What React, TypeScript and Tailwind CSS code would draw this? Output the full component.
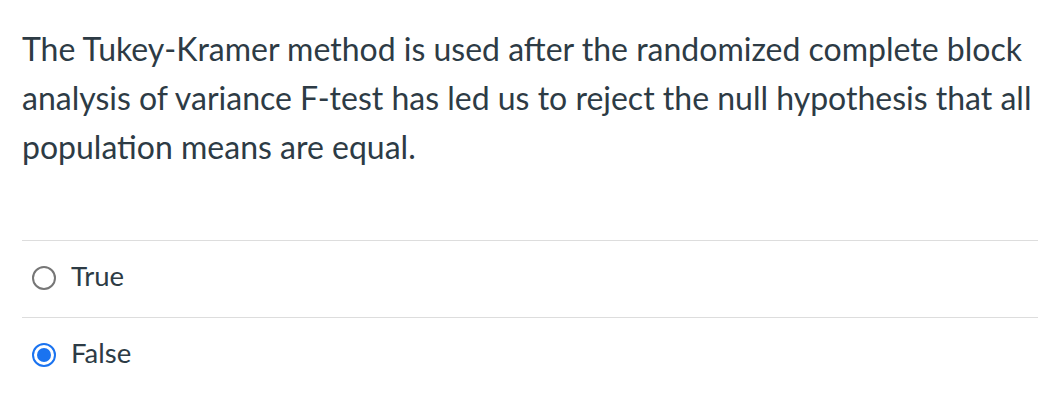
import React from "react";

function Radio({ checked }: { checked: boolean }) {
  return checked ? (
    <span className="mb-[2px] flex h-[24px] w-[24px] shrink-0 items-center justify-center rounded-full border-[2.5px] border-[#1a73f0] bg-white">
      <span className="h-[14px] w-[14px] rounded-full bg-[#1a73f0]" />
    </span>
  ) : (
    <span className="mb-[2px] h-[24px] w-[24px] shrink-0 rounded-full border-[2px] border-[#767676] bg-white" />
  );
}

export default function App() {
  const options = [
    { label: "True", checked: false },
    { label: "False", checked: true },
  ];
  return (
    <div className="h-[414px] w-[1060px] bg-white font-['Lato','Noto_Sans',sans-serif] text-[#2d3b45]">
      <div className="pl-[22px] pr-[22px] pt-[24px]">
        <p className="-mr-[14px] text-[32px] leading-[49px]">
          The Tukey-Kramer method is used after the randomized complete block analysis of variance F-test has led us to reject the null hypothesis that all population means are equal.
        </p>
        <div className="mt-[69px]">
          {options.map((o) => (
            <div key={o.label} className="flex h-[77px] items-center gap-[15px] border-t border-[#dddddd] pl-[10px]">
              <Radio checked={o.checked} />
              <span className="mb-[7px] text-[27.5px]">{o.label}</span>
            </div>
          ))}
        </div>
      </div>
    </div>
  );
}
